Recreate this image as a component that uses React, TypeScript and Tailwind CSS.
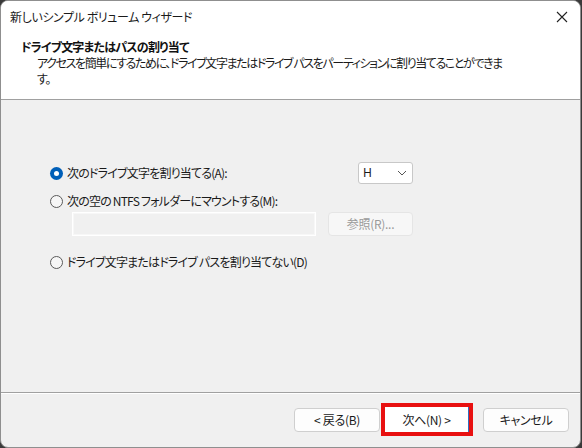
import React from 'react';

const Radio: React.FC<{ checked?: boolean; label: string }> = ({ checked, label }) => (
  <div className="flex items-center h-[16px]">
    {checked ? (
      <div className="w-[13px] h-[13px] rounded-full bg-[#005fb8] flex items-center justify-center">
        <div className="w-[5px] h-[5px] rounded-full bg-white" />
      </div>
    ) : (
      <div className="w-[13px] h-[13px] rounded-full border border-[#5a5a5a] bg-[#f6f6f6]" />
    )}
    <span className="ml-[4px] text-[12px] text-[#1a1a1a] leading-none whitespace-nowrap">{label}</span>
  </div>
);

const Button: React.FC<{ label: string; disabled?: boolean; className?: string }> = ({ label, disabled, className }) => (
  <div
    className={
      'h-[24px] rounded-[4px] border flex items-center justify-center text-[12px] tracking-[-0.3px] ' +
      (disabled ? 'border-[#e5e5e5] bg-[#f7f7f7] text-[#9a9a9a] ' : 'border-[#cfcfcf] bg-[#fdfdfd] text-[#1a1a1a] ') +
      (className ?? '')
    }
  >
    {label}
  </div>
);

export default function App() {
  return (
    <div className="w-[582px] h-[448px] bg-[#3a3a3a] font-['Noto_Sans_CJK_JP','Noto_Sans',sans-serif] [font-feature-settings:'palt'] tracking-[-0.8px]">
      <div className="w-[581px] h-[448px] rounded-[8px] border border-[#8f8f8f] overflow-hidden flex flex-col bg-[#f0f0f0]">
        {/* title + header */}
        <div className="bg-white h-[99px] border-b border-[#a0a0a0] flex flex-col">
          <div className="h-[32px] flex items-center justify-between pl-[9px] pr-[10px]">
            <span className="text-[12px] text-[#1a1a1a] tracking-[-0.4px]">新しいシンプル ボリューム ウィザード</span>
            <svg width="12" height="12" viewBox="0 0 12 12" className="mr-[2px]">
              <path d="M1 1 L11 11 M11 1 L1 11" stroke="#222" strokeWidth="1.1" fill="none" />
            </svg>
          </div>
          <div className="pl-[20px] pt-[6px]">
            <div className="text-[12px] font-bold text-[#111] leading-[16px]">ドライブ文字またはパスの割り当て</div>
            <div className="pl-[16px] text-[12px] text-[#1a1a1a] leading-[16px] tracking-[-1.4px]">
              <div className="whitespace-nowrap">アクセスを簡単にするために、ドライブ文字またはドライブ パスをパーティションに割り当てることができま</div>
              <div>す。</div>
            </div>
          </div>
        </div>
        {/* body */}
        <div className="h-[293px] border-b border-[#a0a0a0] shadow-[0_1px_0_#ffffff] pl-[49px] pt-[62px]">
          <div className="flex items-center h-[22px]">
            <div className="w-[308px]">
              <Radio checked label="次のドライブ文字を割り当てる(A):" />
            </div>
            <div className="w-[55px] h-[22px] bg-white border border-[#c8c8c8] rounded-[3px] flex items-center justify-between pl-[4px] pr-[5px]">
              <span className="text-[12px] text-[#1a1a1a] font-['Noto_Sans',sans-serif] tracking-normal">H</span>
              <svg width="10" height="6" viewBox="0 0 10 6">
                <path d="M1 1 L5 5 L9 1" stroke="#555" strokeWidth="1" fill="none" />
              </svg>
            </div>
          </div>
          <div className="mt-[9px]">
            <Radio label="次の空の NTFS フォルダーにマウントする(M):" />
          </div>
          <div className="flex mt-[3px] ml-[22px]">
            <div className="w-[244px] h-[24px] border border-[#ffffff] bg-[#f0f0f0] shadow-[inset_0_0_0_1px_#f7f7f7]" />
            <Button label="参照(R)..." disabled className="w-[85px] ml-[12px]" />
          </div>
          <div className="mt-[18px]">
            <Radio label="ドライブ文字またはドライブ パスを割り当てない(D)" />
          </div>
        </div>
        {/* footer */}
        <div className="flex-1 flex items-start pt-[15px] pl-[293px]">
          <Button label="< 戻る(B)" className="w-[86px]" />
          <div className="ml-[1px] p-[4px] bg-[#e81010] -mt-[5px]">
            <div className="w-[84px] h-[25px] bg-white flex items-center justify-center text-[12px] text-[#1a1a1a] tracking-[-0.3px] border-r border-[#3070c0]">
              次へ(N) &gt;
            </div>
          </div>
          <Button label="キャンセル" className="w-[86px] ml-[10px]" />
        </div>
      </div>
    </div>
  );
}
